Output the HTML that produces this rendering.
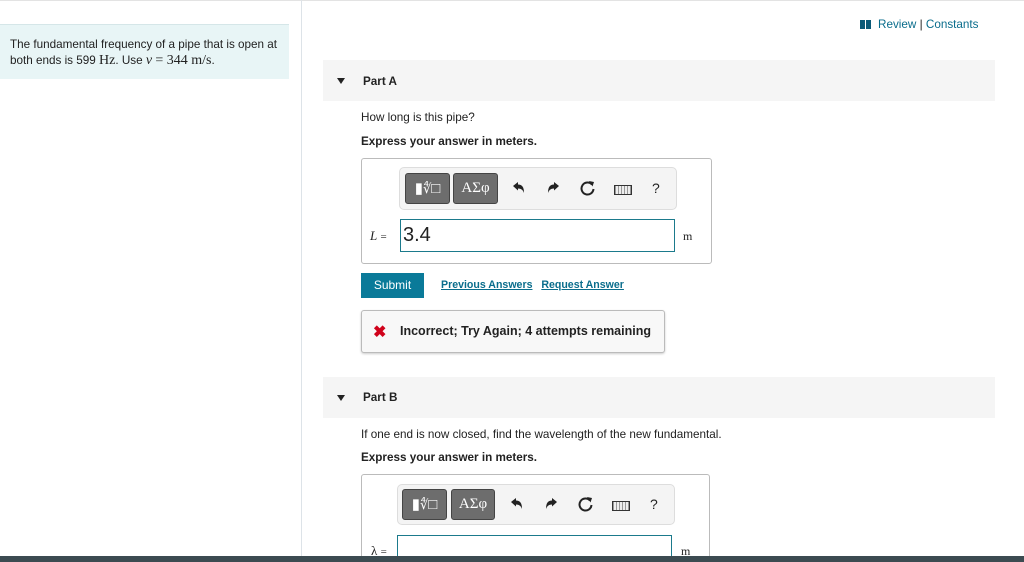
<!DOCTYPE html>
<html><head><meta charset="utf-8"><style>
*{margin:0;padding:0;box-sizing:border-box}
html{width:1024px;height:562px;overflow:hidden}
body{width:1024px;height:562px;overflow:hidden;background:#fff;font-family:"Liberation Sans",Arial,sans-serif;color:#222;position:relative}
.a{position:absolute}
.t{font-size:11.7px;white-space:nowrap}
.b{font-weight:bold}
.band{background:#f5f5f5;left:323px;width:672px;height:41px}
.tri{width:0;height:0;border-left:4.5px solid transparent;border-right:4.5px solid transparent;border-top:6px solid #222}
.box{border:1px solid #bbb;border-radius:3px;background:#fff}
.tb{background:#f4f4f4;border:1px solid #ddd;border-radius:5px}
.btn{background:#6d6d6d;border:1px solid #444;border-radius:3px;color:#fff;font-family:"Liberation Serif",serif;font-size:15px;text-align:center;line-height:29px}
.inp{border:1px solid #1b7a8c;background:#fff}
.ser{font-family:"Liberation Serif",serif}
a{color:#0a6d8c;text-decoration:underline;font-weight:bold}
</style></head><body>
<div class="a" style="left:0;top:0;width:1024px;height:1px;background:#e3e3e3"></div>
<div class="a" style="left:301px;top:0;width:1px;height:562px;background:#dde3e8"></div>
<div class="a" style="left:0;top:24px;width:289px;height:55px;background:#e8f5f6;border-top:1px solid #d5e6e8"></div>
<div class="a t" style="left:10px;top:37px;color:#222;line-height:16px">The fundamental frequency of a pipe that is open at<br>both ends is 599 <span class="ser" style="font-size:14px">Hz</span>. Use <i class="ser" style="font-size:14px">v</i> <span class="ser" style="font-size:14px">= 344 m/s</span>.</div>

<div class="a" style="left:860px;top:20px;width:11px;height:9px;background:#0a5a78"><div style="position:absolute;left:5px;top:0;width:1px;height:9px;background:#fff"></div></div>
<div class="a t" style="left:878px;top:18px;color:#0a6d8c">Review <span style="color:#222">|</span> Constants</div>

<div class="a band" style="top:60px"></div>
<div class="a tri" style="left:337px;top:78px"></div>
<div class="a t b" style="left:363px;top:75px">Part A</div>
<div class="a t" style="left:361px;top:111px">How long is this pipe?</div>
<div class="a t b" style="left:361px;top:135px">Express your answer in meters.</div>

<div class="a box" style="left:361px;top:158px;width:351px;height:106px"></div>
<div class="a tb" style="left:399px;top:167px;width:278px;height:43px"></div>
<div class="a btn" style="left:405px;top:173px;width:45px;height:31px">▮<span style="font-size:13px">∜</span>□</div>
<div class="a btn" style="left:453px;top:173px;width:45px;height:31px">ΑΣφ</div>
<svg class="a" style="left:512px;top:181px" width="14" height="14" viewBox="0 0 14 14"><path d="M1 5 L6 1 L6 3.5 C10 3.5 12 6 12 12 C11 9 9 7.5 6 7.5 L6 9.5 Z" fill="#222"/></svg>
<svg class="a" style="left:546px;top:181px" width="14" height="14" viewBox="0 0 14 14"><path d="M13 5 L8 1 L8 3.5 C4 3.5 2 6 2 12 C3 9 5 7.5 8 7.5 L8 9.5 Z" fill="#222"/></svg>
<svg class="a" style="left:580px;top:180px" width="16" height="16" viewBox="0 0 16 16"><path d="M12 4.5 A6 6 0 1 0 13.5 9" fill="none" stroke="#222" stroke-width="2"/><path d="M9 1 L14 2 L12.5 6.5 Z" fill="#222"/></svg>
<div class="a" style="left:614px;top:185px;width:18px;height:10px;border:1px solid #333;background:repeating-linear-gradient(90deg,#999 0 1px,#eee 1px 3px)"></div>
<div class="a" style="left:652px;top:180px;font-size:14px">?</div>
<div class="a ser" style="left:370px;top:228px;font-size:13px"><i>L</i> <span style="font-size:11px">=</span></div>
<div class="a inp" style="left:400px;top:219px;width:275px;height:33px"></div>
<div class="a" style="left:403px;top:224px;font-size:20px">3.4</div>
<div class="a ser" style="left:683px;top:229px;font-size:12px">m</div>

<div class="a" style="left:361px;top:273px;width:63px;height:25px;background:#0a7a99;color:#fff;font-size:12px;text-align:center;line-height:25px">Submit</div>
<div class="a t" style="left:441px;top:279px;font-size:10.6px"><a>Previous Answers</a>&nbsp;&nbsp;&nbsp;<a>Request Answer</a></div>

<div class="a box" style="left:361px;top:310px;width:304px;height:43px;background:#f8f8f8;box-shadow:0 1px 2px #ccc"></div>
<div class="a b" style="left:373px;top:322px;color:#d0021b;font-size:16px">✖</div>
<div class="a t b" style="left:400px;top:324px;font-size:12.5px">Incorrect; Try Again; 4 attempts remaining</div>

<div class="a band" style="top:377px"></div>
<div class="a tri" style="left:337px;top:395px"></div>
<div class="a t b" style="left:363px;top:391px">Part B</div>
<div class="a t" style="left:361px;top:428px">If one end is now closed, find the wavelength of the new fundamental.</div>
<div class="a t b" style="left:361px;top:451px">Express your answer in meters.</div>

<div class="a box" style="left:361px;top:474px;width:349px;height:100px"></div>
<div class="a tb" style="left:397px;top:484px;width:278px;height:41px"></div>
<div class="a btn" style="left:402px;top:489px;width:45px;height:31px">▮<span style="font-size:13px">∜</span>□</div>
<div class="a btn" style="left:451px;top:489px;width:44px;height:31px">ΑΣφ</div>
<svg class="a" style="left:510px;top:497px" width="14" height="14" viewBox="0 0 14 14"><path d="M1 5 L6 1 L6 3.5 C10 3.5 12 6 12 12 C11 9 9 7.5 6 7.5 L6 9.5 Z" fill="#222"/></svg>
<svg class="a" style="left:544px;top:497px" width="14" height="14" viewBox="0 0 14 14"><path d="M13 5 L8 1 L8 3.5 C4 3.5 2 6 2 12 C3 9 5 7.5 8 7.5 L8 9.5 Z" fill="#222"/></svg>
<svg class="a" style="left:578px;top:496px" width="16" height="16" viewBox="0 0 16 16"><path d="M12 4.5 A6 6 0 1 0 13.5 9" fill="none" stroke="#222" stroke-width="2"/><path d="M9 1 L14 2 L12.5 6.5 Z" fill="#222"/></svg>
<div class="a" style="left:612px;top:501px;width:18px;height:10px;border:1px solid #333;background:repeating-linear-gradient(90deg,#999 0 1px,#eee 1px 3px)"></div>
<div class="a" style="left:650px;top:496px;font-size:14px">?</div>
<div class="a ser" style="left:371px;top:543px;font-size:13px">λ <span style="font-size:11px">=</span></div>
<div class="a inp" style="left:397px;top:535px;width:275px;height:33px"></div>
<div class="a ser" style="left:681px;top:544px;font-size:12px">m</div>

<div class="a" style="left:0;top:556px;width:1024px;height:6px;background:#3c4b51"></div>
</body></html>
